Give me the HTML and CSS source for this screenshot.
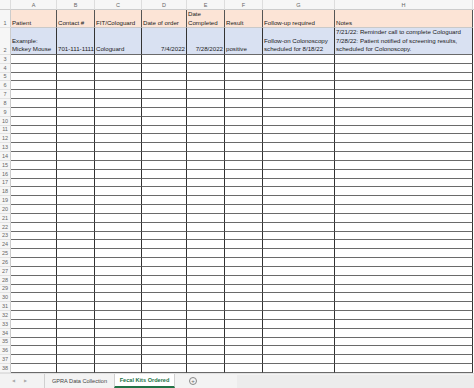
FILE: index.html
```html
<!DOCTYPE html>
<html>
    <head>
        <meta charset="utf-8" />
        <title>Fecal Kits Ordered</title>
        <link rel="stylesheet" href="styles.css">
    </head>
    <body>
        <div class="sheet" id="sheet">
            <div class="corner"></div>
            <div class="colhead">A</div>
            <div class="colhead">B</div>
            <div class="colhead">C</div>
            <div class="colhead">D</div>
            <div class="colhead">E</div>
            <div class="colhead">F</div>
            <div class="colhead">G</div>
            <div class="colhead">H</div>
            <div class="colhead end"></div>

            <div class="rowhead">1</div>
            <div class="cell hdr">Patient</div>
            <div class="cell hdr">Contact #</div>
            <div class="cell hdr">FIT/Cologuard</div>
            <div class="cell hdr">Date of order</div>
            <div class="cell hdr">Date<br>Completed</div>
            <div class="cell hdr">Result</div>
            <div class="cell hdr">Follow-up required</div>
            <div class="cell hdr">Notes</div>
            <div class="cell end"></div>

            <div class="rowhead">2</div>
            <div class="cell ex">Example:<br>Mickey Mouse</div>
            <div class="cell ex">701-111-1111</div>
            <div class="cell ex">Cologuard</div>
            <div class="cell ex num">7/4/2022</div>
            <div class="cell ex num">7/28/2022</div>
            <div class="cell ex">positive</div>
            <div class="cell ex">Follow-on Colonoscopy<br>scheduled for 8/18/22</div>
            <div class="cell ex">7/21/22: Reminder call to complete Cologuard<br>7/28/22: Patient notified of screening results,<br>scheduled for Colonoscopy.</div>
            <div class="cell end"></div>
        </div>

        <div class="tabs">
            <span class="nav">&#9664;</span>
            <span class="nav">&#9654;</span>
            <span class="tab">GPRA Data Collection</span>
            <span class="tab active">Fecal Kits Ordered</span>
            <span class="add">+</span>
            <span class="scroll"></span>
        </div>
        <script src="script.js"></script>
    </body>
</html>
```

FILE: styles.css
```css
* {
    margin: 0;
    padding: 0;
    box-sizing: border-box;
}
body {
    width: 474px;
    height: 388px;
    overflow: hidden;
    background: #fff;
    font-family: "Liberation Sans", Arial, sans-serif;
    color: #1a1a1a;
}

.sheet {
    display: grid;
    grid-template-columns: 11px 46px 38px 47px 45px 38px 38px 72px 138px 1px;
    grid-template-rows: 10px 18px 27px repeat(36, 8.833px);
    height: 373px;
}
.corner,
.colhead,
.rowhead {
    background: #f6f6f6;
    color: #666;
    font-size: 5.5px;
}
.corner {
    border-right: 1px solid #ddd;
    border-bottom: 1px solid #ccc;
}
.colhead {
    display: flex;
    align-items: center;
    justify-content: center;
    border-right: 1px solid #ddd;
    border-bottom: 1px solid #ccc;
}
.colhead.end {
    border-right: 0;
    background: #fff;
}
.rowhead {
    display: flex;
    align-items: flex-end;
    justify-content: center;
    padding-bottom: 1px;
    border-right: 1px solid #ccc;
    border-bottom: 1px solid #e2e2e2;
    line-height: 6px;
}

.cell {
    display: flex;
    flex-direction: column;
    justify-content: flex-end;
    padding: 0 0 0 1px;
    font-size: 6.15px;
    line-height: 8.4px;
    white-space: nowrap;
    overflow: hidden;
    border-right: 1px solid #333;
    border-bottom: 1px solid #6a6a6a;
}
.cell.hdr {
    background: #fce4d6;
    border-bottom-color: #c9c9c9;
    border-right-color: #555;
}
.cell.ex {
    background: #d9e1f2;
    line-height: 8.6px;
}
.cell.num {
    align-items: flex-end;
    padding-right: 1px;
}
.cell.end {
    border-right: 0;
    border-bottom: 0;
    background: #fff;
}

.tabs {
    display: flex;
    align-items: center;
    height: 15px;
    background: #f3f3f3;
    border-top: 1px solid #e0e0e0;
    font-size: 5.6px;
    color: #444;
}
.tabs .nav {
    width: 12px;
    text-align: center;
    font-size: 3.5px;
    color: #aaa;
}
.tabs .nav:first-child {
    margin-left: 7px;
}
.tabs .tab {
    height: 100%;
    display: flex;
    align-items: center;
    padding: 0 7px 0 7px;
    border-left: 1px solid #d0d0d0;
}
.tabs .tab:nth-of-type(3) {
    margin-left: 13px;
}
.tabs .tab.active {
    width: 61px;
    justify-content: center;
    background: #fff;
    color: #217346;
    font-weight: bold;
    padding: 0;
    border-bottom: 2px solid #217346;
    border-right: 1px solid #d0d0d0;
}
.tabs .add {
    width: 8px;
    height: 8px;
    margin-left: 14px;
    border: 1px solid #888;
    border-radius: 50%;
    display: flex;
    align-items: center;
    justify-content: center;
    font-size: 6px;
    line-height: 6px;
    color: #666;
}
.tabs .scroll {
    flex: 1;
    height: 13px;
    margin-left: 40px;
    background: #ececec;
}
```

FILE: script.js
```js
// empty rows 3 - 38
const sheet = document.getElementById('sheet')
for (let r = 3; r <= 38; r++) {
    const head = document.createElement('div')
    head.className = 'rowhead'
    head.textContent = r
    sheet.appendChild(head)
    for (let c = 0; c < 8; c++) {
        const cell = document.createElement('div')
        cell.className = 'cell'
        sheet.appendChild(cell)
    }
    const end = document.createElement('div')
    end.className = 'cell end'
    sheet.appendChild(end)
}
```
